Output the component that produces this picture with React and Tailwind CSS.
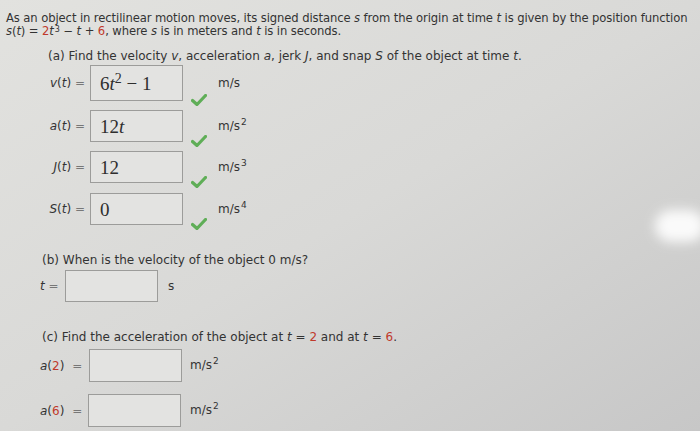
import React from 'react';

const sans = { fontFamily: '"DejaVu Sans", Verdana, sans-serif' };

function Check() {
  return (
    <svg width="16" height="12" viewBox="0 0 16 12" className="shrink-0">
      <path d="M1.5 6.5 L6 10.5 L14.5 1.5" fill="none" stroke="#5fae57" strokeWidth="3.2" strokeLinecap="round" strokeLinejoin="round" />
    </svg>
  );
}

function Box({ w = 'w-[93px]', h = 'h-[32px]', children }) {
  return (
    <div className={`${w} ${h} border border-[#9c9c9a] bg-[#e3e3e1] flex items-center pl-[9px] shrink-0`}>
      <span className="text-[19px] text-[#2e2e2e] leading-none" style={{ fontFamily: '"Liberation Serif", "Times New Roman", serif' }}>
        {children}
      </span>
    </div>
  );
}

function Unit({ children }) {
  return <span className="text-[12px] text-[#333]">{children}</span>;
}

function Sup({ children }) {
  return <span className="text-[9px] relative top-[-5px] ml-[1px]">{children}</span>;
}

function AnswerRow({ label, value, unit, h, mt }) {
  return (
    <div className={`flex items-center ${mt}`}>
      <div className="w-[48px] text-right pr-[5px] text-[12px] text-[#333]">{label}</div>
      <Box h={h}>{value}</Box>
      <div className="self-end mb-[-5px] ml-[8px]"><Check /></div>
      <div className="ml-[11px] mt-[-3px]"><Unit>{unit}</Unit></div>
    </div>
  );
}

export default function App() {
  return (
    <div
      className="relative w-[700px] h-[431px] overflow-hidden bg-gradient-to-br from-[#e2e2df] via-[#d9d9d7] to-[#c7c7c7] text-[#333]"
      style={sans}
    >
      <div className="absolute left-[655px] top-[210px] w-[50px] h-[32px] rounded-full bg-white blur-[6px] opacity-90" />
      <div className="px-[6px] pt-[12px] text-[11.6px] leading-[13px] tracking-[-0.1px]">
        <p>
          As an object in rectilinear motion moves, its signed distance <i>s</i> from the origin at time <i>t</i> is given by the position function
        </p>
        <p>
          <i>s</i>(<i>t</i>) = <span className="text-[#c0392b]">2</span><i>t</i><span className="text-[8px] relative top-[-3px] ml-[1px]">3</span> − <i>t</i> + <span className="text-[#c0392b]">6</span>, where <i>s</i> is in meters and <i>t</i> is in seconds.
        </p>
      </div>

      <div className="pl-[48px] mt-[8px] text-[12px]">
        (a) Find the velocity <i>v</i>, acceleration <i>a</i>, jerk <i>J</i>, and snap <i>S</i> of the object at time <i>t</i>.
      </div>

      <div className="pl-[42px]">
        <AnswerRow
          mt="mt-0"
          h="h-[36px]"
          label={<><i>v</i>(<i>t</i>) <span className="text-[#777]">=</span></>}
          value={<>6<i>t</i><span className="text-[14px] relative top-[-7px]">2</span> − 1</>}
          unit="m/s"
        />
        <AnswerRow
          mt="mt-[9px]"
          label={<><i>a</i>(<i>t</i>) <span className="text-[#777]">=</span></>}
          value={<>12<i>t</i></>}
          unit={<>m/s<Sup>2</Sup></>}
        />
        <AnswerRow
          mt="mt-[9px]"
          label={<><i>J</i>(<i>t</i>) <span className="text-[#777]">=</span></>}
          value="12"
          unit={<>m/s<Sup>3</Sup></>}
        />
        <AnswerRow
          mt="mt-[10px]"
          label={<><i>S</i>(<i>t</i>) <span className="text-[#777]">=</span></>}
          value="0"
          unit={<>m/s<Sup>4</Sup></>}
        />
      </div>

      <div className="pl-[42px] mt-[26px] text-[12px]">(b) When is the velocity of the object 0 m/s?</div>
      <div className="flex items-center pl-[40px] mt-[1px]">
        <span className="text-[12px] w-[25px]"><i>t</i> <span className="text-[#777]">=</span></span>
        <Box />
        <span className="ml-[10px] text-[12px]">s</span>
      </div>

      <div className="pl-[42px] mt-[26px] text-[12px]">
        (c) Find the acceleration of the object at <i>t</i> = <span className="text-[#c0392b]">2</span> and at <i>t</i> = <span className="text-[#c0392b]">6</span>.
      </div>
      <div className="flex items-center pl-[40px] mt-[3px]">
        <span className="text-[12px] w-[49px]"><i>a</i>(<span className="text-[#c0392b]">2</span>) <span className="text-[#777] ml-[4px]">=</span></span>
        <Box h="h-[33px]" />
        <span className="ml-[8px] mt-[-4px]"><Unit>m/s<Sup>2</Sup></Unit></span>
      </div>
      <div className="flex items-center pl-[40px] mt-[12px]">
        <span className="text-[12px] w-[48px]"><i>a</i>(<span className="text-[#c0392b]">6</span>) <span className="text-[#777] ml-[4px]">=</span></span>
        <Box h="h-[33px]" />
        <span className="ml-[9px] mt-[-4px]"><Unit>m/s<Sup>2</Sup></Unit></span>
      </div>
    </div>
  );
}
